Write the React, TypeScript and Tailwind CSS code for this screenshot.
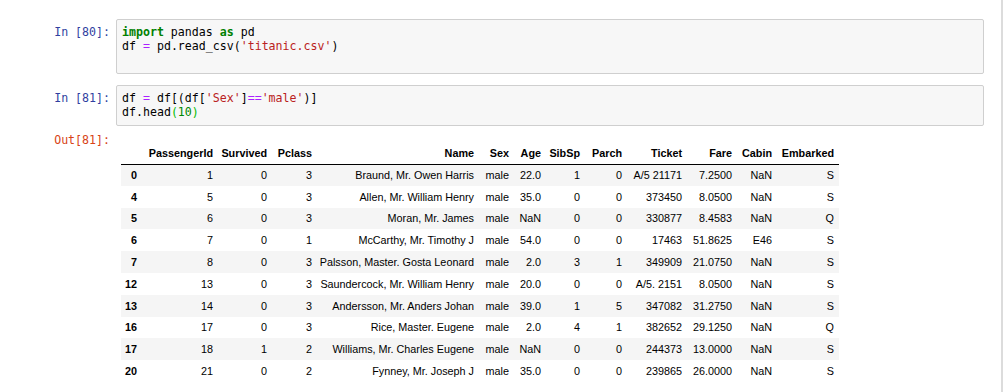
import React from "react";

const mono = { fontFamily: '"DejaVu Sans Mono", "Liberation Mono", monospace' };

const cols = [
  { h: "", w: "w-[21px]" },
  { h: "PassengerId", w: "w-[76px]" },
  { h: "Survived", w: "w-[54px]" },
  { h: "Pclass", w: "w-[45px]" },
  { h: "Name", w: "w-[162px]" },
  { h: "Sex", w: "w-[35px]" },
  { h: "Age", w: "w-[32px]" },
  { h: "SibSp", w: "w-[39px]" },
  { h: "Parch", w: "w-[42px]" },
  { h: "Ticket", w: "w-[60px]" },
  { h: "Fare", w: "w-[50px]" },
  { h: "Cabin", w: "w-[40px]" },
  { h: "Embarked", w: "w-[62px]" },
];

const rows: string[][] = [
  ["0", "1", "0", "3", "Braund, Mr. Owen Harris", "male", "22.0", "1", "0", "A/5 21171", "7.2500", "NaN", "S"],
  ["4", "5", "0", "3", "Allen, Mr. William Henry", "male", "35.0", "0", "0", "373450", "8.0500", "NaN", "S"],
  ["5", "6", "0", "3", "Moran, Mr. James", "male", "NaN", "0", "0", "330877", "8.4583", "NaN", "Q"],
  ["6", "7", "0", "1", "McCarthy, Mr. Timothy J", "male", "54.0", "0", "0", "17463", "51.8625", "E46", "S"],
  ["7", "8", "0", "3", "Palsson, Master. Gosta Leonard", "male", "2.0", "3", "1", "349909", "21.0750", "NaN", "S"],
  ["12", "13", "0", "3", "Saundercock, Mr. William Henry", "male", "20.0", "0", "0", "A/5. 2151", "8.0500", "NaN", "S"],
  ["13", "14", "0", "3", "Andersson, Mr. Anders Johan", "male", "39.0", "1", "5", "347082", "31.2750", "NaN", "S"],
  ["16", "17", "0", "3", "Rice, Master. Eugene", "male", "2.0", "4", "1", "382652", "29.1250", "NaN", "Q"],
  ["17", "18", "1", "2", "Williams, Mr. Charles Eugene", "male", "NaN", "0", "0", "244373", "13.0000", "NaN", "S"],
  ["20", "21", "0", "2", "Fynney, Mr. Joseph J", "male", "35.0", "0", "0", "239865", "26.0000", "NaN", "S"],
];

function Prompt({ children, out }: { children: React.ReactNode; out?: boolean }) {
  return (
    <div
      className={`w-[116px] shrink-0 pr-[6px] text-right text-[11.6px] leading-[14px] whitespace-pre ${
        out ? "text-[#D84315]" : "text-[#303F9F]"
      }`}
      style={mono}
    >
      {children}
    </div>
  );
}

function CodeBox({ children }: { children: React.ReactNode }) {
  return (
    <div
      className="w-[868px] border border-[#cfcfcf] rounded-[2px] bg-[#f7f7f7] pl-[5px] pt-[5px] pb-[6px] text-[11.6px] leading-[14px] text-black whitespace-pre"
      style={mono}
    >
      {children}
    </div>
  );
}

export default function App() {
  return (
    <div className="w-[1004px] h-[392px] bg-white overflow-hidden flex" style={{ fontFamily: '"Liberation Sans", Arial, sans-serif' }}>
      <div className="w-[1001px] shrink-0 pt-[19px]">
        {/* Cell 80 */}
        <div className="flex">
          <Prompt>
            <div className="pt-[6px]">In [80]:</div>
          </Prompt>
          <CodeBox>
            <div>
              <span className="text-[#008000] font-bold">import</span> pandas <span className="text-[#008000] font-bold">as</span> pd
            </div>
            <div>
              df <span className="text-[#AA22FF]">=</span> pd.read_csv(<span className="text-[#BA2121]">'titanic.csv'</span>)
            </div>
            <div>&nbsp;</div>
          </CodeBox>
        </div>

        {/* Cell 81 */}
        <div className="flex mt-[11px]">
          <Prompt>
            <div className="pt-[6px]">In [81]:</div>
          </Prompt>
          <CodeBox>
            <div>
              df <span className="text-[#AA22FF]">=</span> df[(df[<span className="text-[#BA2121]">'Sex'</span>]
              <span className="text-[#AA22FF]">==</span>
              <span className="text-[#BA2121]">'male'</span>)]
            </div>
            <div>
              df.head<span className="text-[#00bb00]">(</span>
              <span className="text-[#008800]">10</span>
              <span className="text-[#00bb00]">)</span>
            </div>
          </CodeBox>
        </div>

        {/* Output 81 */}
        <div className="flex">
          <Prompt out>
            <div className="pt-[7px]">Out[81]:</div>
          </Prompt>
          <div className="pl-[5px] pt-[17px]">
            <table className="table-fixed border-collapse w-[718px] text-[10.8px] text-black">
              <thead>
                <tr className="h-[21px] border-b border-black">
                  {cols.map((c, i) => (
                    <th key={i} className={`${c.w} p-0 pr-[5px] text-right font-bold whitespace-nowrap align-middle`}>
                      {c.h}
                    </th>
                  ))}
                </tr>
              </thead>
              <tbody>
                {rows.map((r, ri) => (
                  <tr key={ri} className={`h-[21.8px] ${ri % 2 === 0 ? "bg-[#f5f5f5]" : "bg-white"}`}>
                    {r.map((v, ci) =>
                      ci === 0 ? (
                        <th key={ci} className="p-0 pr-[5px] text-right font-bold whitespace-nowrap align-middle">
                          {v}
                        </th>
                      ) : (
                        <td key={ci} className="p-0 pr-[5px] text-right whitespace-nowrap align-middle">
                          {v}
                        </td>
                      )
                    )}
                  </tr>
                ))}
              </tbody>
            </table>
          </div>
        </div>
      </div>
      <div className="w-[2px] h-full bg-[#dcdcdc] shrink-0" />
    </div>
  );
}
